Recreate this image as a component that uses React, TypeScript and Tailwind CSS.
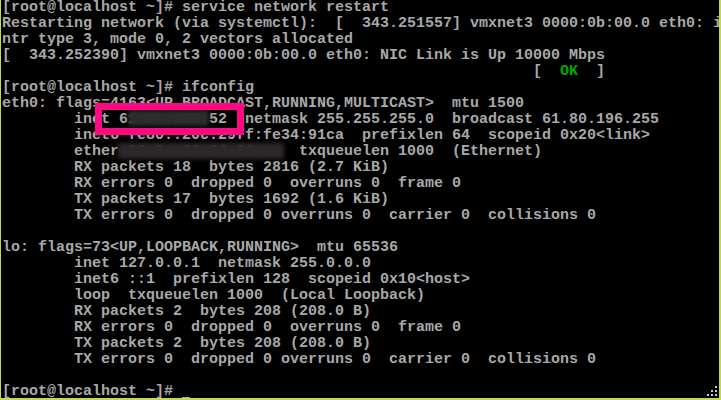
import React from 'react';

const lines: React.ReactNode[] = [
  '[root@localhost ~]# service network restart',
  'Restarting network (via systemctl):  [  343.251557] vmxnet3 0000:0b:00.0 eth0: i',
  'ntr type 3, mode 0, 2 vectors allocated',
  '[  343.252390] vmxnet3 0000:0b:00.0 eth0: NIC Link is Up 10000 Mbps',
  <>
    {'                                                           [  '}
    <span className="text-[#00a800]">OK</span>
    {'  ]'}
  </>,
  '[root@localhost ~]# ifconfig',
  'eth0: flags=4163<UP,BROADCAST,RUNNING,MULTICAST>  mtu 1500',
  '        inet 61.80.196.52  netmask 255.255.255.0  broadcast 61.80.196.255',
  '        inet6 fe80::20c:29ff:fe34:91ca  prefixlen 64  scopeid 0x20<link>',
  '        ether 00:0c:29:34:91:ca  txqueuelen 1000  (Ethernet)',
  '        RX packets 18  bytes 2816 (2.7 KiB)',
  '        RX errors 0  dropped 0  overruns 0  frame 0',
  '        TX packets 17  bytes 1692 (1.6 KiB)',
  '        TX errors 0  dropped 0 overruns 0  carrier 0  collisions 0',
  '',
  'lo: flags=73<UP,LOOPBACK,RUNNING>  mtu 65536',
  '        inet 127.0.0.1  netmask 255.0.0.0',
  '        inet6 ::1  prefixlen 128  scopeid 0x10<host>',
  '        loop  txqueuelen 1000  (Local Loopback)',
  '        RX packets 2  bytes 208 (208.0 B)',
  '        RX errors 0  dropped 0  overruns 0  frame 0',
  '        TX packets 2  bytes 208 (208.0 B)',
  '        TX errors 0  dropped 0 overruns 0  carrier 0  collisions 0',
  '',
  <>
    {'[root@localhost ~]# '}
    <span className="inline-block w-[8px] h-[2px] bg-[#a8a8a8] align-[-4px]" />
  </>,
];

function ResizeGrip() {
  const dots = [
    [8, 0],
    [4, 4],
    [8, 4],
    [0, 8],
    [4, 8],
    [8, 8],
  ];
  return (
    <svg width="11" height="11" viewBox="0 0 11 11" className="absolute right-[1px] bottom-[1px]">
      {dots.map(([x, y], i) => (
        <rect key={i} x={x} y={y} width="2" height="2" fill="#d0d0d0" />
      ))}
    </svg>
  );
}

export default function App() {
  return (
    <div className="w-[721px] h-[400px] bg-black border-l border-r-2 border-b-2 border-[#c3d94e] overflow-hidden relative box-border">
      <div className="pl-px font-['Liberation_Mono',monospace] text-[15px] leading-[16px] font-bold text-[#a8a8a8]">
        {lines.map((line, i) => (
          <div key={i} className="whitespace-pre h-[16px]">
            {line}
          </div>
        ))}
      </div>

      {/* redacted address */}
      <div className="absolute left-[127px] top-[110px] w-[81px] h-[16px] bg-[#2c2c2c] blur-[2px]" />
      <div className="absolute left-[117px] top-[143px] w-[166px] h-[16px] bg-[#2b272a] blur-[2px]" />

      {/* highlight box */}
      <div className="absolute left-[94px] top-[103px] w-[149px] h-[32px] border-[7px] border-[#fd0a82]" />

      <ResizeGrip />
    </div>
  );
}
